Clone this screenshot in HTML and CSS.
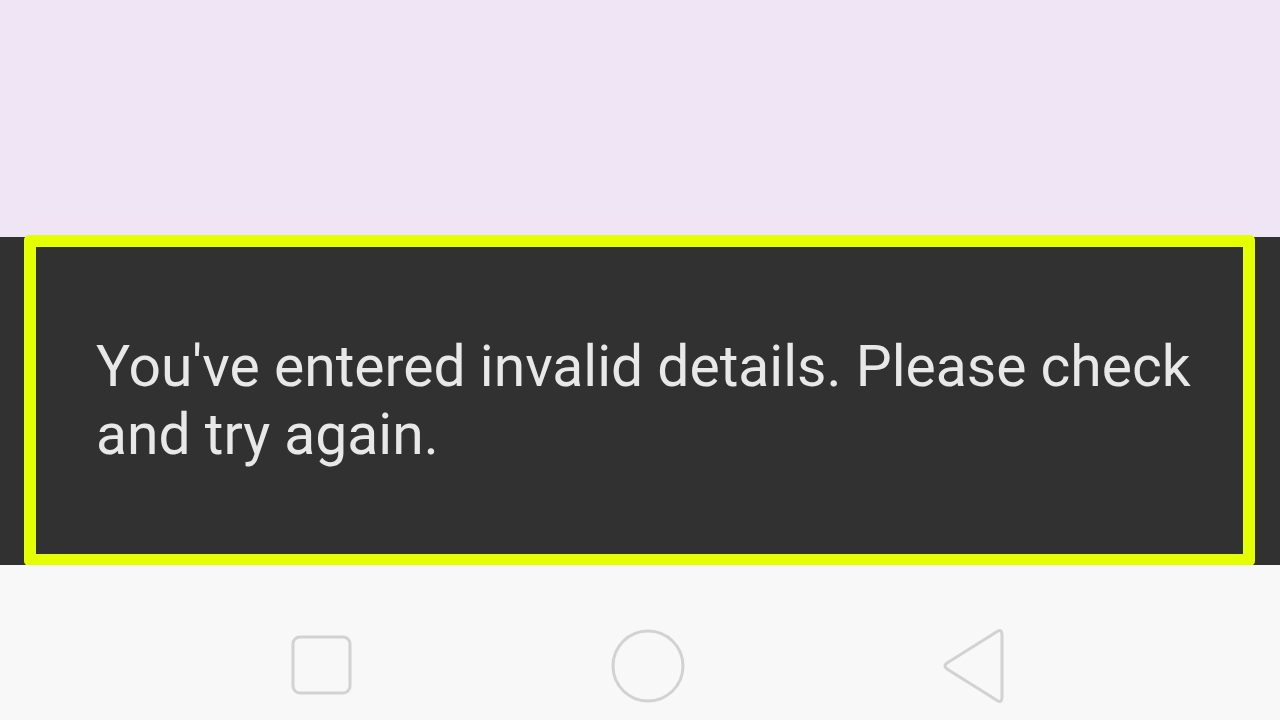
FILE: index.html
```html
<!DOCTYPE html>
<html lang="en">
<head>
  <meta charset="UTF-8">
  <meta name="viewport" content="width=device-width, initial-scale=1.0">
  <title>Invalid details</title>
  <link rel="stylesheet" href="styles.css">
</head>
<body>

  <div class="screen">
    <div class="app-area"></div>

    <!-- Snackbar with highlight -->
    <div class="snackbar">
      <div class="highlight">
        <p class="message">You've entered invalid details. Please check and try again.</p>
      </div>
    </div>

    <!-- Android nav bar -->
    <div class="nav-bar">
      <svg class="nav-icon" width="62" height="62" viewBox="0 0 62 62">
        <rect x="2" y="2" width="57" height="56" rx="7" fill="none" stroke="#d2d2d2" stroke-width="3"/>
      </svg>
      <svg class="nav-icon" width="76" height="76" viewBox="0 0 76 76">
        <circle cx="38" cy="38" r="35" fill="none" stroke="#d2d2d2" stroke-width="3"/>
      </svg>
      <svg class="nav-icon" width="64" height="76" viewBox="0 0 64 76">
        <path d="M56 3 Q60 1 60 7 L60 69 Q60 75 56 73 L5 41 Q1 38 5 35 Z" fill="none" stroke="#d2d2d2" stroke-width="3" stroke-linejoin="round"/>
      </svg>
    </div>
  </div>

</body>
</html>
```

FILE: styles.css
```css
body {
  margin: 0;
  padding: 0;
  font-family: Roboto, 'Noto Sans', sans-serif;
  overflow: hidden;
}

.screen {
  width: 1280px;
  height: 720px;
  display: flex;
  flex-direction: column;
}

.app-area {
  height: 237px;
  background-color: #efe5f5;
}

.snackbar {
  height: 328px;
  background-color: #313131;
  padding: 0 25px 0 24px;
}

.highlight {
  box-sizing: border-box;
  margin-top: -2px;
  height: 331px;
  border: 12px solid #e4ff00;
  border-radius: 5px;
  display: flex;
  align-items: center;
  padding: 0 30px 0 60px;
}

.message {
  margin: 0;
  color: #e8e8e8;
  font-size: 57px;
  line-height: 68px;
}

.nav-bar {
  flex: 1;
  background-color: #f8f8f8;
  display: flex;
  align-items: center;
  padding-top: 46px;
  padding-left: 291px;
}

.nav-icon:nth-child(1) {
  margin-right: 257px;
}

.nav-icon:nth-child(2) {
  margin-right: 256px;
}
```
